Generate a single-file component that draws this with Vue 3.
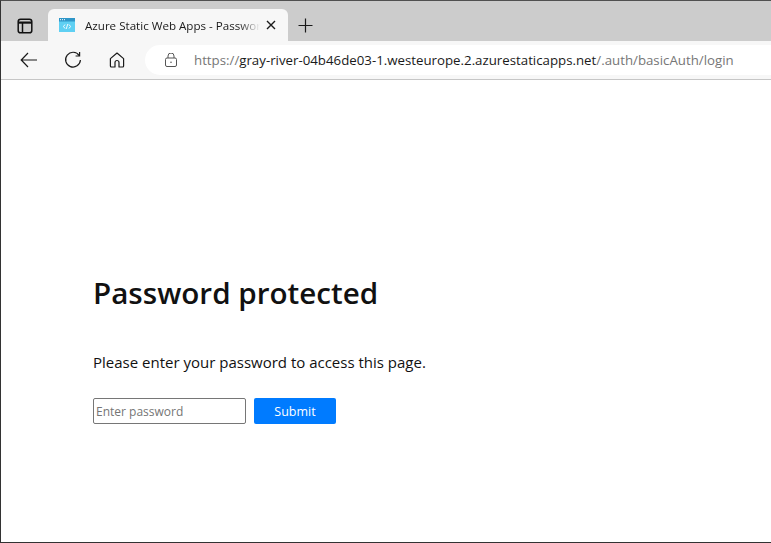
<script setup>
const host = 'gray-river-04b46de03-1.westeurope.2.azurestaticapps.net'
const path = '/.auth/basicAuth/login'
</script>

<template>
  <div class="window">
    <div class="tabstrip">
      <button class="tab-actions" aria-label="Tab actions">
        <svg width="16" height="16" viewBox="0 0 16 16" fill="none" stroke="#111" stroke-width="1.5">
          <rect x="1.2" y="1.2" width="13.6" height="13.6" rx="2.4" />
          <path d="M1.2 4.6h13.6" stroke-width="2.2" />
          <path d="M5.5 5v9.6" />
        </svg>
      </button>
      <div class="tab">
        <svg class="favicon" width="16" height="14" viewBox="0 0 16 14">
          <rect x="0" y="0" width="16" height="14" fill="#5fd0f3" />
          <rect x="0" y="0" width="16" height="3.5" fill="#2f96c8" />
          <path d="M1 1.7h1M3 1.7h1M5 1.7h1" stroke="#fff" stroke-width="1" />
          <path d="M6 6.5 4.5 8.5 6 10.5M10 6.5l1.5 2-1.5 2M8.8 6 7.2 11" stroke="#fff" stroke-width="0.9" fill="none" />
        </svg>
        <span class="tab-title">Azure Static Web Apps - Password protected</span>
        <svg class="tab-close" width="10" height="10" viewBox="0 0 10 10" stroke="#1a1a1a" stroke-width="1.4">
          <path d="M1 1l8 8M9 1L1 9" />
        </svg>
      </div>
      <button class="new-tab" aria-label="New tab">
        <svg width="15" height="15" viewBox="0 0 15 15" stroke="#1a1a1a" stroke-width="1.2">
          <path d="M7.5 0.5v14M0.5 7.5h14" />
        </svg>
      </button>
    </div>

    <div class="toolbar">
      <button class="nav" aria-label="Back">
        <svg width="18" height="16" viewBox="0 0 18 16" fill="none" stroke="#1a1a1a" stroke-width="1.2">
          <path d="M17 8H1.2M8 1 1.2 8 8 15" />
        </svg>
      </button>
      <button class="nav" aria-label="Refresh">
        <svg width="18" height="18" viewBox="0 0 18 18" fill="none" stroke="#1a1a1a" stroke-width="1.2">
          <path d="M15.2 4.6A7.4 7.4 0 1 0 16.4 9" />
          <path d="M15.6 1v4h-4" />
        </svg>
      </button>
      <button class="nav" aria-label="Home">
        <svg width="16" height="16" viewBox="0 0 16 16" fill="none" stroke="#1a1a1a" stroke-width="1.2" stroke-linejoin="round">
          <path d="M6 15H2.4a1 1 0 0 1-1-1V6.6L8 1l6.6 5.6V14a1 1 0 0 1-1 1H10v-4.5a2 2 0 0 0-4 0z" />
        </svg>
      </button>
      <div class="address">
        <svg class="lock" width="12" height="14" viewBox="0 0 12 14" fill="none" stroke="#555" stroke-width="1">
          <rect x="0.5" y="5" width="11" height="8.5" rx="1.5" />
          <path d="M3 5V3a3 3 0 0 1 6 0v2" />
          <circle cx="6" cy="9.2" r="0.8" fill="#555" stroke="none" />
        </svg>
        <span class="url"><span class="dim">https://</span>{{ host }}<span class="dim">{{ path }}</span></span>
      </div>
    </div>

    <main class="page">
      <h1>Password protected</h1>
      <p>Please enter your password to access this page.</p>
      <form class="login" @submit.prevent>
        <input type="password" placeholder="Enter password" />
        <button type="submit">Submit</button>
      </form>
    </main>
  </div>
</template>

<style scoped>
.window {
  width: 771px;
  height: 543px;
  box-sizing: border-box;
  border-top: 1px solid #505050;
  border-left: 1px solid #333;
  border-bottom: 1px solid #333;
  display: flex;
  flex-direction: column;
  overflow: hidden;
  background: #fff;
  font-family: "Open Sans", "Noto Sans", sans-serif;
}

button { background: none; border: none; padding: 0; cursor: pointer; }

.tabstrip {
  height: 40px;
  flex: none;
  display: flex;
  align-items: flex-end;
  background: #cccccc;
}
.tab-actions {
  width: 47px;
  height: 31px;
  display: flex;
  align-items: center;
  justify-content: center;
}
.tab {
  width: 240px;
  height: 32px;
  box-sizing: border-box;
  display: flex;
  align-items: center;
  padding: 0 12px 0 11px;
  background: #f7f7f7;
  border-radius: 6px 6px 0 0;
}
.favicon { flex: none; margin-right: 10px; }
.tab-title {
  flex: 1;
  overflow: hidden;
  white-space: nowrap;
  font-size: 11.6px;
  color: #1a1a1a;
  -webkit-mask-image: linear-gradient(to right, #000 88%, transparent);
  mask-image: linear-gradient(to right, #000 88%, transparent);
}
.tab-close { flex: none; margin-left: 6px; }
.new-tab {
  width: 34px;
  height: 31px;
  display: flex;
  align-items: center;
  justify-content: center;
}

.toolbar {
  height: 39px;
  flex: none;
  box-sizing: border-box;
  display: flex;
  align-items: center;
  padding-left: 6px;
  background: #f7f7f7;
  border-bottom: 1px solid #c6c6c6;
}
.nav {
  width: 44px;
  height: 32px;
  display: flex;
  align-items: center;
  justify-content: center;
  flex: none;
}
.address {
  flex: 1;
  height: 30px;
  margin-left: 6px;
  margin-right: -20px;
  display: flex;
  align-items: center;
  padding-left: 20px;
  background: #fff;
  border-radius: 15px;
}
.lock { flex: none; margin-right: 17px; }
.url { font-size: 13.27px; color: #1a1a1a; white-space: nowrap; }
.dim { color: #767676; }

.page {
  flex: 1;
  padding: 193px 0 0 92px;
  color: #111;
}
h1 {
  margin: 0;
  font-size: 29.6px;
  font-weight: 600;
  line-height: 40px;
}
p {
  margin: 37px 0 0;
  font-size: 15px;
  line-height: 24px;
}
.login {
  display: flex;
  align-items: center;
  gap: 8px;
  margin-top: 24px;
}
.login input {
  width: 153px;
  height: 26px;
  box-sizing: border-box;
  padding: 0 2px;
  border: 1px solid #767676;
  border-radius: 2px;
  font: 12px "Open Sans", "Noto Sans", sans-serif;
}
.login input::placeholder { color: #757575; opacity: 1; }
.login button {
  width: 82px;
  height: 26px;
  border-radius: 2px;
  background: #007bff;
  color: #fff;
  font: 12.5px "Open Sans", "Noto Sans", sans-serif;
}
</style>
